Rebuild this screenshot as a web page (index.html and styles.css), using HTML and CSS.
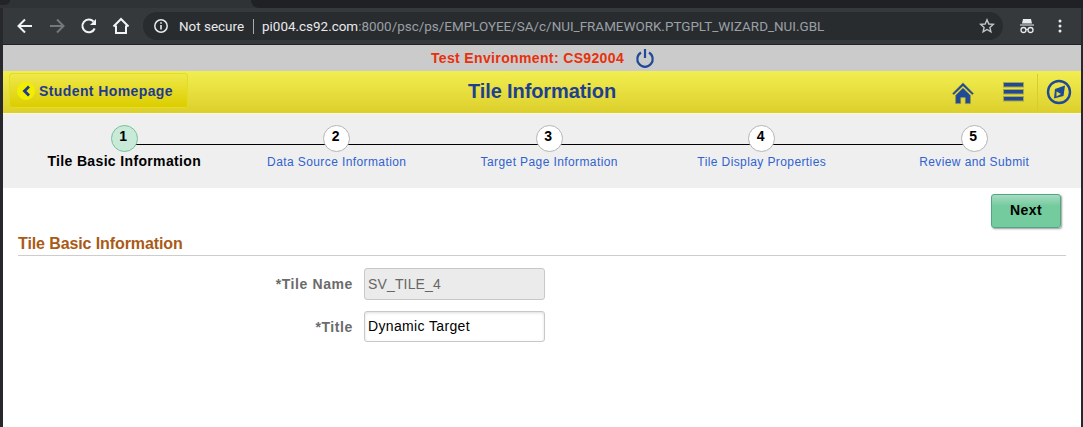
FILE: index.html
```html
<!DOCTYPE html>
<html lang="en">
<head>
<meta charset="utf-8">
<title>Tile Information</title>
<link rel="stylesheet" href="styles.css">
</head>
<body>
<div class="frame">
  <div class="tabstrip"><div class="tab-notch"></div><div class="tab-dark"></div></div>
  <div class="toolbar">
    <svg class="tb-icon" width="20" height="20" viewBox="0 0 20 20"><path d="M17 10H4M10 3.500L3.500 10l6.500 6.500" fill="none" stroke="#f1f3f4" stroke-width="2"/></svg>
    <svg class="tb-icon" width="20" height="20" viewBox="0 0 20 20"><path d="M3 10h13M10 3.500l6.500 6.500-6.500 6.500" fill="none" stroke="#74787b" stroke-width="2"/></svg>
    <svg class="tb-icon" width="20" height="20" viewBox="0 0 20 20"><path d="M15.700 12.500A6.400 6.400 0 1 1 14.500 5.500" fill="none" stroke="#f1f3f4" stroke-width="2"/><path d="M17 3v6h-6z" fill="#f1f3f4"/></svg>
    <svg class="tb-icon" width="20" height="20" viewBox="0 0 20 20"><path d="M2.500 10.500L10 3l7.500 7.500M5 9.500V17h10V9.500" fill="none" stroke="#f1f3f4" stroke-width="2"/></svg>
    <div class="omnibox">
      <svg class="info" width="16" height="16" viewBox="0 0 16 16"><circle cx="8" cy="8" r="6.200" fill="none" stroke="#e8eaed" stroke-width="1.500"/><path d="M8 7v4.500M8 4.300v1.500" stroke="#e8eaed" stroke-width="1.600"/></svg>
      <span class="secure">Not secure</span>
      <span class="sep"></span>
      <span class="url"><span class="host">pi004.cs92.com</span>:8000/psc/ps/EMPLOYEE/SA/c/NUI_FRAMEWORK.PTGPLT_WIZARD_NUI.GBL</span>
      <svg class="star" width="16" height="16" viewBox="0 0 16 16"><path d="M8 1.800l1.800 4.200 4.500.4-3.400 3 1 4.400L8 11.500l-3.900 2.300 1-4.400-3.400-3 4.500-.4z" fill="none" stroke="#c4c7ca" stroke-width="1.400"/></svg>
    </div>
    <svg class="incognito" width="18" height="18" viewBox="0 0 18 18"><path d="M5 2h8l1 4.500H4zM2 7.500h14v1H2z" fill="#e8eaed"/><circle cx="5.500" cy="13" r="2.500" fill="none" stroke="#e8eaed" stroke-width="1.300"/><circle cx="12.500" cy="13" r="2.500" fill="none" stroke="#e8eaed" stroke-width="1.300"/><path d="M8 12.500h2" stroke="#e8eaed"/></svg>
    <svg class="kebab" width="6" height="14" viewBox="0 0 6 14"><circle cx="3" cy="2" r="1.500" fill="#e8eaed"/><circle cx="3" cy="7" r="1.500" fill="#e8eaed"/><circle cx="3" cy="12" r="1.500" fill="#e8eaed"/></svg>
  </div>
  <div class="envbar">
    <span class="envtext">Test Environment: CS92004</span>
    <svg width="20" height="20" viewBox="0 0 20 20"><path d="M6 4.500a7.700 7.700 0 1 0 8 0" fill="none" stroke="#1f4a97" stroke-width="2.200"/><path d="M10 1v9" stroke="#1f4a97" stroke-width="2.200"/></svg>
  </div>
  <header class="banner">
    <a class="backbtn"><span class="backdot"><svg width="9" height="12" viewBox="0 0 9 12"><path d="M7 1.500L2.500 6l4.500 4.500" fill="none" stroke="#1f3a93" stroke-width="2.800"/></svg></span>Student Homepage</a>
    <h1 class="pagetitle">Tile Information</h1>
    <div class="banner-icons">
      <svg class="b-home" width="24" height="24" viewBox="0 0 26 25"><path d="M13 1.500L1.500 13l1.500 1.500L13 5l10 9.500 1.500-1.500z" fill="#1f4a97" stroke="#8f8f45" stroke-width=".6"/><path d="M5 15L13 7l8 8v9h-5.500v-6.500h-5V24H5z" fill="#1f4a97" stroke="#8f8f45" stroke-width=".6"/></svg>
      <svg class="b-menu" width="21" height="20" viewBox="0 0 21 20"><g fill="#1f4a97" stroke="#a9a542"><rect x=".5" y=".5" width="20" height="4.500"/><rect x=".5" y="7.500" width="20" height="4.500"/><rect x=".5" y="14.500" width="20" height="4.500"/></g></svg>
      <div class="b-divider"><svg width="26" height="26" viewBox="0 0 26 26"><circle cx="13" cy="13" r="11" fill="none" stroke="#1f4a97" stroke-width="2.400"/><path d="M19 6.500L17.500 17 8 19.500 9 10z" fill="#1f4a97"/><path d="M10.500 12.500v5l4.500-2.500z" fill="#e6dc38"/></svg></div>
    </div>
  </header>
  <nav class="steps">
    <div class="step active"><span class="num">1</span><span class="lbl">Tile Basic Information</span></div>
    <div class="step"><span class="num">2</span><a class="lbl">Data Source Information</a></div>
    <div class="step"><span class="num">3</span><a class="lbl">Target Page Information</a></div>
    <div class="step"><span class="num">4</span><a class="lbl">Tile Display Properties</a></div>
    <div class="step"><span class="num">5</span><a class="lbl">Review and Submit</a></div>
  </nav>
  <main class="content">
    <div class="actions"><button class="next" type="button">Next</button></div>
    <h2 class="section">Tile Basic Information</h2>
    <div class="form">
      <label class="flabel">*Tile Name</label><div class="finput disabled">SV_TILE_4</div>
      <label class="flabel">*Title</label><div class="finput">Dynamic Target</div>
    </div>
  </main>
</div>
</body>
</html>
```
FILE: styles.css
```css
* { box-sizing: border-box; }
html, body { margin: 0; height: 100%; }
body { background: #fff; font-family: "Liberation Sans", Arial, sans-serif; overflow: hidden; }
.frame { width: 1083px; height: 427px; border-left: 3px solid #26282b; border-right: 2px solid #26282b; display: flex; flex-direction: column; background: #fff; }

.tabstrip { height: 8px; background: #2f3336; position: relative; margin-left: -3px; margin-right: -2px; }
.tab-notch { position: absolute; left: 0; top: 0; width: 10px; height: 5px; background: #222427; border-radius: 0 0 5px 0; }
.tab-dark { position: absolute; left: 251px; right: 0; top: 0; height: 8px; background: #202124; border-bottom-left-radius: 8px; }

.toolbar { height: 37px; background: #35393c; border-bottom: 1px solid #222; display: flex; align-items: center; padding-left: 12px; }
.tb-icon { margin-right: 12px; flex: none; }
.omnibox { width: 860px; height: 28px; background: #292c2f; border-radius: 14px; display: flex; align-items: center; padding-left: 10px; color: #9aa0a6; font-family: "Roboto", sans-serif; font-size: 13.450px; }
.info { margin-right: 10px; }
.secure { color: #e8eaed; }
.sep { width: 1px; height: 15px; background: #aaa; margin: 0 8px 0 9px; }
.url { white-space: nowrap; flex: 1; }
.host { color: #e8eaed; }
.star { margin-right: 8px; }
.incognito { margin-left: 15px; }
.kebab { margin-left: 21px; }

.envbar { height: 26px; background: #cbcbcb; display: flex; align-items: center; justify-content: center; gap: 11px; padding-left: 2px; }
.envtext { color: #e8300c; font-size: 14px; font-weight: bold; letter-spacing: .36px; }

.banner { height: 42px; background: linear-gradient(#f2ee50, #dccf2c); display: flex; align-items: center; position: relative; }
.backbtn { margin: 2px 0 0 6px; align-self: flex-start; width: 179px; height: 35px; border: 1px solid #e3dc20; border-radius: 3px; background: linear-gradient(#efe94a, #dccd00); display: flex; align-items: center; color: #1f3a93; font-size: 14px; font-weight: bold; letter-spacing: .4px; }
.backdot { width: 18px; height: 18px; border-radius: 50%; background: #f2ee00; display: flex; align-items: center; justify-content: center; margin: 0 4px 0 7px; }
.pagetitle { position: absolute; left: 0; right: 0; top: 0; height: 41px; margin: 0; text-align: center; line-height: 40px; font-size: 20px; font-weight: bold; color: #1f3f8f; letter-spacing: -.1px; }
.banner-icons { margin-left: auto; display: flex; align-items: center; height: 100%; position: relative; }
.b-home { margin: 1px 28px 0 0; }
.b-menu { margin-right: 13px; }
.b-divider { height: 37px; width: 44px; border-left: 1px solid #d6cc30; display: flex; align-items: center; padding-left: 8px; }

.steps { height: 75px; background: #efefef; border-top: 1px solid #f8f8e0; display: grid; grid-template-columns: repeat(5, 212.500px); padding-left: 15px; flex: none; }
.step { display: flex; flex-direction: column; align-items: center; position: relative; padding-top: 11px; }
.step:not(:last-child)::after { content: ""; position: absolute; left: 50%; width: 100%; top: 30px; height: 1px; background: #000; }
.num { width: 27px; height: 27px; padding-right: 2px; border-radius: 50%; background: #fff; border: 1px solid #b5b5b5; position: relative; z-index: 1; text-align: center; font-size: 14px; font-weight: bold; line-height: 21px; color: #000; }
.active .num { background: #c9ead8; border-color: #76c29a; }
.lbl { margin-top: 1px; font-size: 12px; line-height: 18px; color: #2f63cf; letter-spacing: .4px; white-space: nowrap; }
.active .lbl { margin-top: 0; color: #000; font-size: 14px; font-weight: bold; letter-spacing: .35px; }

.content { flex: 1; padding: 6px 15px 0; }
.actions { display: flex; justify-content: flex-end; padding-right: 5px; }
.next { width: 70px; height: 34px; padding: 0 0 3px; border: 1px solid #4fa883; border-radius: 3px; background: linear-gradient(#a7dcc2, #73cb9e 35%, #73cb9e); box-shadow: 1px 1px 2px #999; font: bold 14px "Liberation Sans", Arial, sans-serif; letter-spacing: .4px; color: #000; }
.section { margin: 6px 0 0; height: 22px; font-size: 16px; line-height: 19px; font-weight: bold; color: #a95a16; border-bottom: 1px solid #cdcdcd; letter-spacing: -.1px; }
.form { display: grid; grid-template-columns: 346px 181px; row-gap: 11px; align-items: center; margin-top: 12px; }
.flabel { text-align: right; padding-right: 11px; font-size: 14px; font-weight: bold; color: #6b6b6b; letter-spacing: .6px; }
.finput { height: 31px; width: 181px; border: 1px solid #c8c8c8; border-radius: 3px; padding-left: 3px; line-height: 29px; font-size: 14px; letter-spacing: .35px; color: #000; box-shadow: inset 0 1px 3px #ddd; }
.finput.disabled { height: 32px; line-height: 30px; background: #ebebeb; color: #666; box-shadow: none; letter-spacing: .15px; }
```
